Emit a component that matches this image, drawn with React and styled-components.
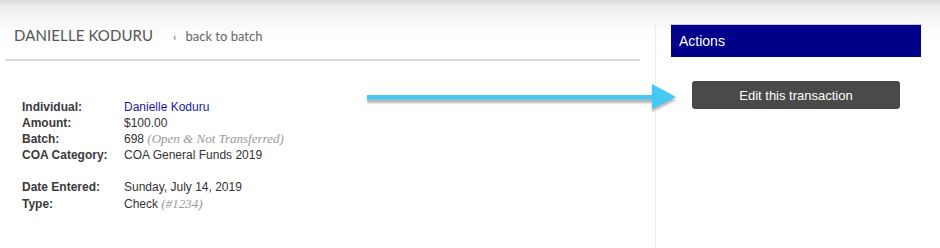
import React from "react";
import styled, { createGlobalStyle } from "styled-components";

const Global = createGlobalStyle`
  html, body { margin: 0; padding: 0; background: #fff; }
  body { font-family: "Liberation Sans", Arial, sans-serif; }
`;

const Page = styled.div`
  position: relative;
  width: 940px;
  height: 248px;
  display: flex;
  background: linear-gradient(#dadada 0px, #ececec 6px, #f6f6f6 18px, #fcfcfc 32px, #ffffff 44px);
  overflow: hidden;
`;

const Main = styled.div`
  width: 635px;
  margin-left: 5px;
  flex: none;
`;

const Header = styled.div`
  height: 61px;
  box-sizing: border-box;
  padding: 26px 0 0 9px;
  display: flex;
  align-items: baseline;
  border-bottom: 2px solid #dcdcdc;
`;

const Title = styled.h1`
  margin: 0;
  font-family: Lato, "Open Sans", sans-serif;
  font-weight: 400;
  font-size: 15px;
  color: #555;
  letter-spacing: 0.1px;
`;

const BackLink = styled.a`
  margin-left: 20px;
  font-family: Lato, "Open Sans", sans-serif;
  font-size: 13px;
  color: #666;
  text-decoration: none;
  & span { margin-right: 9px; font-size: 12px; }
`;

const Details = styled.div`
  padding: 38px 0 0 17px;
  display: grid;
  grid-template-columns: 102px auto;
  grid-auto-rows: 16.1px;
  font-size: 12px;
  color: #333;
`;

const Label = styled.div`
  font-weight: bold;
  color: #3a3a3a;
  line-height: 16px;
`;

const Value = styled.div`
  line-height: 16px;
  color: #333;
`;

const Spacer = styled.div`
  grid-column: 1 / span 2;
`;

const Link = styled.a`
  color: #1a1a9c;
  text-decoration: none;
`;

const Note = styled.em`
  font-family: "Liberation Serif", "DejaVu Serif", serif;
  font-size: 13px;
  color: #999;
`;

const Sidebar = styled.aside`
  margin-left: 15px;
  margin-top: 24px;
  border-left: 1px solid #ececec;
  padding-left: 15px;
  flex: none;
  width: 250px;
`;

const PanelTitle = styled.div`
  height: 33px;
  box-sizing: border-box;
  background: #000088;
  border-top: 1px solid #c8c8d8;
  color: #fff;
  font-size: 14px;
  padding: 8px 0 0 8px;
`;

const Button = styled.button`
  display: block;
  margin: 24px 0 0 21px;
  width: 208px;
  height: 28px;
  border: none;
  border-radius: 3px;
  background: #4a4a4a;
  color: #fff;
  font-family: "Liberation Sans", Arial, sans-serif;
  font-size: 13px;
  cursor: pointer;
`;

const ArrowLayer = styled.svg`
  position: absolute;
  left: 360px;
  top: 78px;
  pointer-events: none;
`;

const Arrow = () => (
  <ArrowLayer width="330" height="40" viewBox="0 0 330 40">
    <defs>
      <filter id="sh" x="-5%" y="-50%" width="110%" height="200%">
        <feGaussianBlur stdDeviation="1.2" />
      </filter>
    </defs>
    <g fill="#9a9a9a" opacity="0.7" filter="url(#sh)" transform="translate(0,3)">
      <rect x="7" y="17" width="288" height="5" />
      <polygon points="292,6 316,19 292,31" />
    </g>
    <rect x="7" y="17" width="288" height="4.5" fill="#45c8f3" />
    <polygon points="292,6 316,19 292,31" fill="#45c8f3" />
  </ArrowLayer>
);

export default function App() {
  return (
    <>
      <Global />
      <Page>
        <Main>
          <Header>
            <Title>DANIELLE KODURU</Title>
            <BackLink href="#">
              <span>‹</span>back to batch
            </BackLink>
          </Header>
          <Details>
            <Label>Individual:</Label>
            <Value>
              <Link href="#">Danielle Koduru</Link>
            </Value>
            <Label>Amount:</Label>
            <Value>$100.00</Value>
            <Label>Batch:</Label>
            <Value>
              698 <Note>(Open &amp; Not Transferred)</Note>
            </Value>
            <Label>COA Category:</Label>
            <Value>COA General Funds 2019</Value>
            <Spacer />
            <Label>Date Entered:</Label>
            <Value>Sunday, July 14, 2019</Value>
            <Label>Type:</Label>
            <Value>
              Check <Note>(#1234)</Note>
            </Value>
          </Details>
        </Main>
        <Sidebar>
          <PanelTitle>Actions</PanelTitle>
          <Button>Edit this transaction</Button>
        </Sidebar>
        <Arrow />
      </Page>
    </>
  );
}
